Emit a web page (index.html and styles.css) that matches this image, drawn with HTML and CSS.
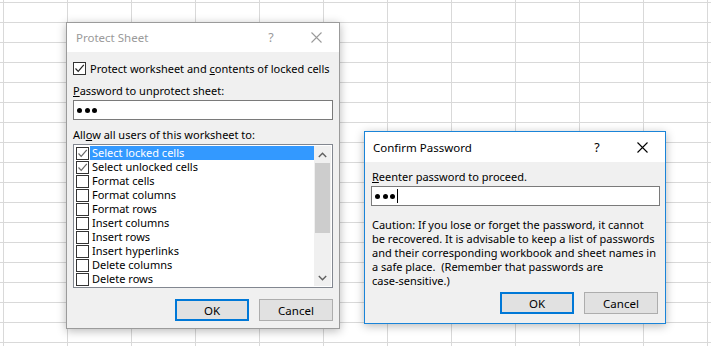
FILE: index.html
```html
<!DOCTYPE html>
<html lang="en">
<head>
  <meta charset="UTF-8">
  <title>Protect Sheet</title>
  <link rel="stylesheet" href="styles.css">
</head>
<body>
  <div class="dialog protect">
    <div class="titlebar">
      <span class="title">Protect Sheet</span>
      <span class="help">?</span>
      <svg class="close" width="11" height="11" viewBox="0 0 11 11"><path d="M0.5 0.5L10.5 10.5M10.5 0.5L0.5 10.5" stroke="currentColor" stroke-width="1.1"/></svg>
    </div>
    <div class="body">
      <label class="check-row">
        <span class="box"><svg width="11" height="11" viewBox="0 0 11 11"><path d="M1.5 5.5L4.2 8.3L9.8 1.8" fill="none" stroke="#222" stroke-width="1.2"/></svg></span>
        <span>Protect worksheet and <u>c</u>ontents of locked cells</span>
      </label>
      <div class="label pw-label"><u>P</u>assword to unprotect sheet:</div>
      <div class="field"><span class="dot"></span><span class="dot"></span><span class="dot"></span></div>
      <div class="label allow-label">All<u>o</u>w all users of this worksheet to:</div>
      <div class="listbox">
        <ul class="items" id="items"></ul>
        <div class="scrollbar">
          <svg class="arrow" width="9" height="6" viewBox="0 0 9 6"><path d="M0.8 5L4.5 1.3L8.2 5" fill="none" stroke="#606060" stroke-width="1.4"/></svg>
          <div class="track"><div class="thumb"></div></div>
          <svg class="arrow" width="9" height="6" viewBox="0 0 9 6"><path d="M0.8 1L4.5 4.7L8.2 1" fill="none" stroke="#606060" stroke-width="1.4"/></svg>
        </div>
      </div>
      <div class="buttons">
        <button class="btn default">OK</button>
        <button class="btn">Cancel</button>
      </div>
    </div>
  </div>

  <div class="dialog confirm">
    <div class="titlebar">
      <span class="title">Confirm Password</span>
      <span class="help">?</span>
      <svg class="close" width="11" height="11" viewBox="0 0 11 11"><path d="M0.5 0.5L10.5 10.5M10.5 0.5L0.5 10.5" stroke="currentColor" stroke-width="1.1"/></svg>
    </div>
    <div class="body">
      <div class="label pw-label"><u>R</u>eenter password to proceed.</div>
      <div class="field"><span class="dot"></span><span class="dot"></span><span class="dot"></span><span class="caret"></span></div>
      <p class="caution">Caution: If you lose or forget the password, it cannot<br>be recovered. It is advisable to keep a list of passwords<br>and their corresponding workbook and sheet names in<br>a safe place.&nbsp; (Remember that passwords are<br>case-sensitive.)</p>
      <div class="buttons">
        <button class="btn default">OK</button>
        <button class="btn">Cancel</button>
      </div>
    </div>
  </div>

  <script>
    const opcoes = [
      ["Select locked cells", true],
      ["Select unlocked cells", true],
      ["Format cells", false],
      ["Format columns", false],
      ["Format rows", false],
      ["Insert columns", false],
      ["Insert rows", false],
      ["Insert hyperlinks", false],
      ["Delete columns", false],
      ["Delete rows", false]
    ];
    const lista = document.getElementById("items");
    opcoes.forEach((o, i) => {
      const marca = o[1] ? '<svg width="11" height="11" viewBox="0 0 11 11"><path d="M1.5 5.5L4.2 8.3L9.8 1.8" fill="none" stroke="#666" stroke-width="1.2"/></svg>' : "";
      lista.innerHTML += `<li class="${i === 0 ? "selected" : ""}"><span class="box">${marca}</span><span class="text">${o[0]}</span></li>`;
    });
  </script>
</body>
</html>
```

FILE: styles.css
```css
html, body {
  margin: 0;
  height: 100%;
}
body {
  font-family: "Noto Sans", "Open Sans", sans-serif;
  font-size: 11px;
  color: #000;
  white-space: nowrap;
  background-color: #fff;
  background-image:
    linear-gradient(to right, #d9d9d9 1px, transparent 1px),
    linear-gradient(to bottom, #d9d9d9 1px, transparent 1px);
  background-size: 64px 20px;
  background-position: 3px 2px;
  position: relative;
  overflow: hidden;
}
.dialog {
  position: absolute;
  box-sizing: border-box;
  background: #f0f0f0;
  border: 1px solid #9b9b9b;
  box-shadow: 0 2px 9px rgba(0, 0, 0, 0.28);
  display: flex;
  flex-direction: column;
}
.protect {
  left: 66px;
  top: 22px;
  width: 274px;
  height: 307px;
}
.confirm {
  left: 364px;
  top: 131px;
  width: 302px;
  height: 193px;
  border-color: #1a84d8;
}
.titlebar {
  background: #fff;
  height: 29px;
  display: flex;
  align-items: center;
  padding-left: 9px;
}
.confirm .titlebar {
  height: 30px;
  padding-left: 8px;
}
.title {
  flex: 1;
  font-size: 11.5px;
  color: #9a9a9a;
}
.confirm .title {
  color: #000;
}
.help {
  width: 12px;
  text-align: center;
  margin-right: 34px;
  color: #9a9a9a;
  font-size: 12.5px;
}
.close {
  color: #9a9a9a;
  margin-right: 17px;
}
.confirm .help,
.confirm .close {
  color: #000;
}
.body {
  flex: 1;
  padding: 0 6px;
  display: flex;
  flex-direction: column;
}
.confirm .body {
  padding: 0 5px 0 6px;
}
.check-row {
  display: flex;
  align-items: center;
  height: 16px;
  margin-top: 8px;
}
.box {
  box-sizing: border-box;
  width: 13px;
  height: 13px;
  border: 1px solid #333;
  background: #fff;
  display: inline-flex;
  align-items: center;
  justify-content: center;
  margin-right: 4px;
  flex: none;
}
.label {
  height: 16px;
  line-height: 16px;
}
.pw-label {
  margin-top: 7px;
}
.allow-label {
  margin-top: 7px;
}
.confirm .label {
  margin-left: 1px;
}
.field {
  box-sizing: border-box;
  height: 20px;
  border: 1px solid #7a7a7a;
  background: #fff;
  display: flex;
  align-items: center;
  padding-left: 3px;
  margin-top: 1px;
}
.dot {
  width: 5px;
  height: 5px;
  border-radius: 50%;
  background: #000;
  margin-right: 2.6px;
}
.caret {
  width: 1px;
  height: 14px;
  background: #000;
  margin-left: -1px;
}
.listbox {
  box-sizing: border-box;
  height: 144px;
  margin-top: 1px;
  border: 1px solid #828790;
  background: #fff;
  display: flex;
  padding: 1px;
}
.items {
  list-style: none;
  margin: 0;
  padding: 0;
  flex: 1;
}
.items li {
  height: 14px;
  display: flex;
  align-items: center;
  padding-left: 1px;
}
.items .box {
  margin-right: 1px;
}
.items .text {
  flex: 1;
  height: 14px;
  line-height: 14px;
  padding-left: 2px;
}
.items .selected .text {
  background: #3399ff;
  color: #fff;
}
.scrollbar {
  width: 17px;
  display: flex;
  flex-direction: column;
  align-items: center;
  background: #f0f0f0;
}
.arrow {
  flex: none;
  margin: 6px 0 5px;
}
.track {
  flex: 1;
  width: 15px;
  margin-bottom: 1px;
}
.thumb {
  height: 70px;
  background: #cdcdcd;
}
.buttons {
  display: flex;
  justify-content: flex-end;
  gap: 10px;
  margin-top: auto;
  margin-bottom: 7px;
}
.confirm .buttons {
  margin-bottom: 9px;
  margin-right: 2px;
}
.btn {
  box-sizing: border-box;
  width: 74px;
  height: 22px;
  font-family: inherit;
  font-size: 11.5px;
  background: #e1e1e1;
  border: 1px solid #adadad;
  padding: 0;
}
.btn.default {
  border: 2px solid #0078d7;
}
.caution {
  margin: 12px 0 0 1px;
  line-height: 14px;
  white-space: nowrap;
}
```
